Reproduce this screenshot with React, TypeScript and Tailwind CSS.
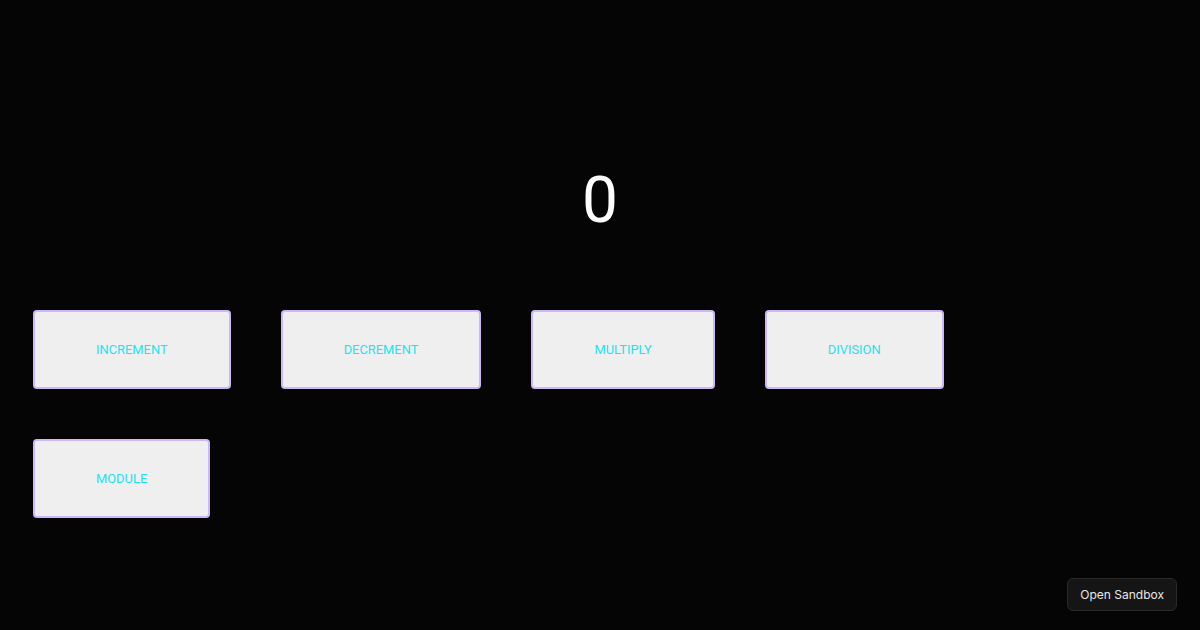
export default function App() {
  const ops = ["INCREMENT", "DECREMENT", "MULTIPLY", "DIVISION", "MODULE"];
  return (
    <div className="relative h-[630px] w-full overflow-hidden bg-[#050505] font-['Roboto',sans-serif]">
      <div className="pt-[161px] text-center text-[64px] leading-[80px] text-white">0</div>
      <div className="mt-[69px] flex w-[960px] flex-wrap gap-[50px] pl-[33px]">
        {ops.map((op) => (
          <button
            key={op}
            className="rounded-[4px] border-2 border-[#cdb8f7] bg-[#efefef] px-[61px] py-[30px] text-[12.9px] leading-[15px] text-[#1ee3f0]"
          >
            {op}
          </button>
        ))}
      </div>
      <button className="absolute bottom-[19px] right-[23px] rounded-[6px] border border-[#2a2a2a] bg-[#151515] px-3 py-[7px] font-['Inter',sans-serif] text-[12px] leading-[17px] text-[#e8e8e8]">
        Open Sandbox
      </button>
    </div>
  );
}
